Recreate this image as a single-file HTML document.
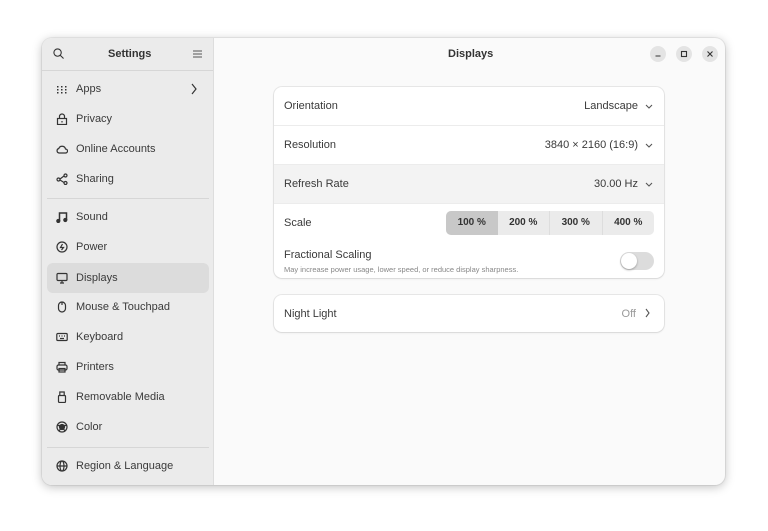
<!DOCTYPE html><html><head><style>
body{margin:0;width:768px;height:531px;background:#fff;font-family:"Liberation Sans",sans-serif;position:relative;overflow:hidden}
.win{position:absolute;left:42px;top:38px;width:683px;height:447px;border-radius:10px;overflow:hidden;background:#fafafa;box-shadow:0 2px 10px rgba(0,0,0,.25),0 0 0 1px rgba(0,0,0,.06)}
.side{position:absolute;left:0;top:0;width:171px;height:447px;background:#ebebeb;border-right:1px solid #ddd}
.t{position:absolute;font-size:11px;color:#333;white-space:nowrap}
.it{position:absolute;left:0;width:171px;height:30px;font-size:11px;color:#3a3a3a}
.it span{position:absolute;left:34px;top:9px}
.it svg{position:absolute;left:14px;top:9px;width:12px;height:12px;fill:none;stroke:#333;stroke-width:1.2}
.sep{position:absolute;left:5px;width:162px;height:1px;background:#d6d6d6}
.card{position:absolute;left:232px;width:390px;background:#fff;border-radius:8px;box-shadow:0 0 0 1px rgba(0,0,0,.07),0 1px 2px rgba(0,0,0,.08);overflow:hidden}
.row{position:relative;height:38px;border-bottom:1px solid #ececec;font-size:11px;color:#3a3a3a}
.row .l{position:absolute;left:10px;top:13px}
.row .r{position:absolute;right:26px;top:13px}
.row svg.c{position:absolute;right:11px;top:17px;width:8px;height:5px;fill:none;stroke:#555;stroke-width:1.1}
.btn{position:absolute;width:16px;height:16px;border-radius:50%;background:#e4e4e4;top:8px}
.btn svg{position:absolute;left:4px;top:4px;width:8px;height:8px;fill:none;stroke:#333;stroke-width:1.1}
</style></head><body>
<div class="win">
<div class="side">
<svg style="position:absolute;left:11px;top:10px;width:11px;height:11px;fill:none;stroke:#333;stroke-width:1.2" viewBox="0 0 12 12"><circle cx="5" cy="5" r="4"/><path d="M8 8l3.5 3.5"/></svg>
<div class="t" style="left:66px;top:10px;font-weight:bold">Settings</div>
<svg style="position:absolute;left:151px;top:12px;width:9px;height:8px;stroke:#555;stroke-width:1" viewBox="0 0 9 8"><path d="M0 1h9M0 4h9M0 7h9"/></svg>
<div class="sep" style="left:0;width:171px;top:32px"></div>
<div class="it" style="top:36px"><svg viewBox="0 0 12 12" style="stroke:none;fill:#333"><rect x="1" y="3" width="1.5" height="1.5"/><rect x="5" y="3" width="1.5" height="1.5"/><rect x="9" y="3" width="1.5" height="1.5"/><rect x="1" y="6" width="1.5" height="1.5"/><rect x="5" y="6" width="1.5" height="1.5"/><rect x="9" y="6" width="1.5" height="1.5"/><rect x="1" y="9" width="1.5" height="1.5"/><rect x="5" y="9" width="1.5" height="1.5"/><rect x="9" y="9" width="1.5" height="1.5"/></svg><span>Apps</span><svg viewBox="0 0 12 12" style="left:146px"><path d="M4 1l4 5-4 5"/></svg></div>
<div class="it" style="top:66px"><svg viewBox="0 0 12 12"><rect x="1.5" y="5.5" width="9" height="6"/><path d="M3.5 5.5V3.5a2.5 2.5 0 0 1 5 0v2"/><path d="M6 8v1.5"/></svg><span>Privacy</span></div>
<div class="it" style="top:96px"><svg viewBox="0 0 12 12"><path d="M3 10h6.5a2 2 0 0 0 0-4 3.5 3.5 0 0 0-6.7-.5A2.3 2.3 0 0 0 3 10z"/></svg><span>Online Accounts</span></div>
<div class="it" style="top:126px"><svg viewBox="0 0 12 12"><circle cx="2.5" cy="6.5" r="1.5"/><circle cx="9.5" cy="2.5" r="1.5"/><circle cx="9.5" cy="10" r="1.5"/><path d="M4 6l4-3M4 7l4 2.5"/></svg><span>Sharing</span></div>
<div class="sep" style="top:160px"></div>
<div class="it" style="top:164px"><svg viewBox="0 0 12 12"><path d="M3.5 10V2h7v7" stroke-width="1.5"/><circle cx="2.3" cy="10" r="1.5" fill="#333"/><circle cx="9.3" cy="9" r="1.5" fill="#333"/></svg><span>Sound</span></div>
<div class="it" style="top:194px"><svg viewBox="0 0 12 12"><circle cx="6" cy="6" r="5"/><path d="M6.5 3L4.5 6.5h3L5.5 9"/></svg><span>Power</span></div>
<div class="it" style="top:225px;left:5px;width:162px;background:#dcdcdc;border-radius:6px"><svg viewBox="0 0 12 12" style="left:9px"><rect x="1" y="1.5" width="10" height="7" rx="1"/><path d="M4 11h4M6 8.5V11"/></svg><span style="left:29px">Displays</span></div>
<div class="it" style="top:254px"><svg viewBox="0 0 12 12"><rect x="2.5" y="1" width="7" height="10" rx="3.5"/><path d="M6 1v3"/></svg><span>Mouse &amp; Touchpad</span></div>
<div class="it" style="top:284px"><svg viewBox="0 0 12 12"><rect x="0.8" y="2.5" width="10.4" height="7" rx="1"/><path d="M3 5h1M5.5 5h1M8 5h1M4 7.5h4"/></svg><span>Keyboard</span></div>
<div class="it" style="top:314px"><svg viewBox="0 0 12 12"><path d="M3 4V1.5h6V4"/><rect x="1" y="4" width="10" height="5" rx="1.5"/><rect x="3" y="7.5" width="6" height="3.5"/></svg><span>Printers</span></div>
<div class="it" style="top:344px"><svg viewBox="0 0 12 12"><rect x="2.5" y="4.5" width="7" height="7" rx="1"/><path d="M3.8 4.5V1h4.4v3.5"/></svg><span>Removable Media</span></div>
<div class="it" style="top:374px"><svg viewBox="0 0 12 12"><circle cx="6" cy="6" r="5"/><circle cx="6" cy="6" r="2.5" fill="#333"/><path d="M1.5 4.5h9M6 6l-3 4M6 6l3 4"/></svg><span>Color</span></div>
<div class="sep" style="top:409px"></div>
<div class="it" style="top:413px"><svg viewBox="0 0 12 12"><circle cx="6" cy="6" r="5"/><ellipse cx="6" cy="6" rx="2" ry="5"/><path d="M1 6h10"/></svg><span>Region &amp; Language</span></div>
</div>
<div class="t" style="left:406px;top:10px;font-weight:bold">Displays</div>
<div class="btn" style="left:608px"><svg viewBox="0 0 8 8"><path d="M1.5 6h5"/></svg></div>
<div class="btn" style="left:634px"><svg viewBox="0 0 8 8"><rect x="1.5" y="1.5" width="5" height="5"/></svg></div>
<div class="btn" style="left:660px"><svg viewBox="0 0 8 8"><path d="M1.5 1.5l5 5M6.5 1.5l-5 5"/></svg></div>
<div class="card" style="top:49px;height:191px">
<div class="row"><span class="l">Orientation</span><span class="r">Landscape</span><svg class="c" viewBox="0 0 8 5"><path d="M1 1l3 3 3-3"/></svg></div>
<div class="row"><span class="l">Resolution</span><span class="r">3840 × 2160 (16:9)</span><svg class="c" viewBox="0 0 8 5"><path d="M1 1l3 3 3-3"/></svg></div>
<div class="row" style="background:#f3f3f3"><span class="l">Refresh Rate</span><span class="r">30.00 Hz</span><svg class="c" viewBox="0 0 8 5"><path d="M1 1l3 3 3-3"/></svg></div>
<div class="row" style="border:0"><span class="l">Scale</span>
<div style="position:absolute;left:172px;top:7px;width:208px;height:24px;border-radius:5px;overflow:hidden;background:#ebebeb;display:flex;font-size:10px;font-weight:bold;color:#333">
<div style="flex:1;background:#c8c8c8;text-align:center;line-height:24px">100 %</div><div style="flex:1;text-align:center;line-height:24px;border-right:1px solid #ddd">200 %</div><div style="flex:1;text-align:center;line-height:24px;border-right:1px solid #ddd">300 %</div><div style="flex:1;text-align:center;line-height:24px">400 %</div></div></div>
<div class="row" style="border:0;height:39px"><span class="l" style="top:7px">Fractional Scaling</span><span class="l" style="top:23px;font-size:7.5px;color:#888">May increase power usage, lower speed, or reduce display sharpness.</span>
<div style="position:absolute;left:346px;top:10px;width:34px;height:18px;border-radius:9px;background:#dcdcdc"><div style="position:absolute;left:1px;top:1px;width:16px;height:16px;border-radius:50%;background:#fff;box-shadow:0 1px 2px rgba(0,0,0,.3)"></div></div></div>
</div>
<div class="card" style="top:257px;height:37px">
<div class="row" style="border:0;height:37px"><span class="l">Night Light</span><span class="r" style="color:#999;right:28px">Off</span><svg style="position:absolute;right:14px;top:13px;width:5px;height:10px;fill:none;stroke:#555;stroke-width:1.1" viewBox="0 0 5 10"><path d="M1 1l3 4-3 4"/></svg></div>
</div>
</div>
</body></html>
